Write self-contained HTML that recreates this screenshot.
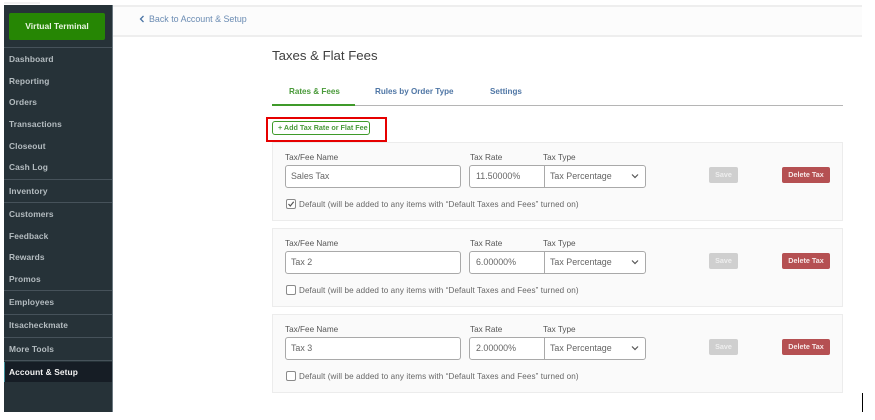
<!DOCTYPE html>
<html><head><meta charset="utf-8"><style>
html,body{margin:0;padding:0;background:#fff;width:875px;height:420px;overflow:hidden;font-family:"Liberation Sans",sans-serif}
#w{left:0;top:0;width:875px;height:420px;filter:blur(.3px)}
div,span{position:absolute;box-sizing:border-box;white-space:nowrap}
#side{left:4px;top:5px;width:109px;height:407px;background:#263238;border-right:1px solid #6d7a82}
.n{left:9px;font-size:8.4px;font-weight:bold;color:#b4bcc0;line-height:10px;letter-spacing:.1px}
.l{left:4px;width:108px;height:1px;background:#46525a}
#hdr{left:113px;top:5px;width:749px;height:32px;background:#fcfcfc;border-top:2px solid #eee;border-bottom:2px solid #eee}
.card{left:272px;width:571px;height:79px;background:#fafafa;border:1px solid #ececec}
.lb{font-size:8.2px;color:#555;line-height:10px}
.box{background:#fff;border:1px solid #a9a9a9;border-radius:3px;height:23px;font-size:8.9px;color:#666;line-height:21px;padding-left:5px}
.sv{left:436px;top:24px;width:29px;height:16px;background:#cfcfcf;border-radius:2px;color:#eee;font-size:7.2px;font-weight:bold;text-align:center;line-height:15px}
.dl{left:509px;top:24px;width:48px;height:16px;background:#b55052;border-radius:2px;color:#f6e6e6;font-size:7.2px;font-weight:bold;text-align:center;line-height:15px}
.cb{left:13px;top:56px;width:10px;height:10px;background:#fff;border:1px solid #8a8a8a;border-radius:2px}
.dt{left:26px;top:57px;font-size:8.1px;color:#666;line-height:10px;letter-spacing:.1px}
</style></head><body><div id="w">
<div style="left:4px;top:2px;width:36px;height:2px;background:#f1f1f1"></div>
<div id="side"></div>
<div style="left:9px;top:13px;width:96px;height:27px;background:#268604;border-radius:2px;color:#e9f5e2;font-size:8.5px;font-weight:bold;text-align:center;line-height:26px">Virtual Terminal</div>
<div class="l" style="top:47px"></div>
<div class="n" style="top:54px">Dashboard</div>
<div class="n" style="top:76px">Reporting</div>
<div class="n" style="top:97px">Orders</div>
<div class="n" style="top:119px">Transactions</div>
<div class="n" style="top:141px">Closeout</div>
<div class="n" style="top:162px">Cash Log</div>
<div class="l" style="top:179px"></div>
<div class="n" style="top:186px">Inventory</div>
<div class="l" style="top:202px"></div>
<div class="n" style="top:209px">Customers</div>
<div class="n" style="top:231px">Feedback</div>
<div class="n" style="top:252px">Rewards</div>
<div class="n" style="top:274px">Promos</div>
<div class="l" style="top:290px"></div>
<div class="n" style="top:297px">Employees</div>
<div class="l" style="top:314px"></div>
<div class="n" style="top:320px">Itsacheckmate</div>
<div class="l" style="top:337px"></div>
<div class="n" style="top:344px">More Tools</div>
<div class="l" style="top:360px"></div>
<div style="left:4px;top:362px;width:108px;height:20px;background:#161d25;border-left:1px solid #3d8f9a"></div>
<div class="n" style="top:367px;color:#f2f2f2">Account &amp; Setup</div>

<div id="hdr"></div>
<svg style="position:absolute;left:139px;top:15px" width="6" height="8" viewBox="0 0 6 8"><path d="M4.5 1L1.5 4l3 3" fill="none" stroke="#4a74a5" stroke-width="1.3"/></svg>
<div style="left:149px;top:14px;font-size:8.9px;color:#6b8cb3;line-height:10px">Back to Account &amp; Setup</div>

<div style="left:272px;top:47px;font-size:13.2px;color:#3f3f3f;line-height:17px">Taxes &amp; Flat Fees</div>
<div style="left:289px;top:87px;font-size:8.1px;font-weight:bold;color:#4a9a3a;line-height:10px">Rates &amp; Fees</div>
<div style="left:375px;top:87px;font-size:8.1px;font-weight:bold;color:#4f76a5;line-height:10px">Rules by Order Type</div>
<div style="left:490px;top:87px;font-size:8.1px;font-weight:bold;color:#4f76a5;line-height:10px">Settings</div>
<div style="left:272px;top:105px;width:571px;height:1px;background:#b5b5b5"></div>
<div style="left:272px;top:104px;width:83px;height:2px;background:#3f9a2a"></div>

<div style="left:266px;top:117px;width:121px;height:25px;border:2px solid #e60000"></div>
<div style="left:272px;top:121px;width:98px;height:14px;background:#fff;border:1px solid #3f9a2a;border-radius:3px;color:#4a9a3a;font-size:7.2px;font-weight:bold;line-height:12px;padding-left:5px">+ Add Tax Rate or Flat Fee</div>

<div class="card" style="top:142px">
 <div class="lb" style="left:12px;top:10px">Tax/Fee Name</div>
 <div class="lb" style="left:197px;top:10px">Tax Rate</div>
 <div class="lb" style="left:270px;top:10px">Tax Type</div>
 <div class="box" style="left:12px;top:22px;width:176px">Sales Tax</div>
 <div class="box" style="left:196px;top:22px;width:76px;border-radius:3px 0 0 3px;padding-left:6px">11.50000%</div>
 <div class="box" style="left:271px;top:22px;width:102px;border-radius:0 3px 3px 0">Tax Percentage</div>
 <svg style="position:absolute;left:358px;top:30px" width="8" height="6" viewBox="0 0 8 6"><path d="M1 1.5L4 4.5 7 1.5" fill="none" stroke="#555" stroke-width="1.2"/></svg>
 <div class="sv">Save</div><div class="dl">Delete Tax</div>
 <div class="cb"><svg style="position:absolute;left:0;top:0" width="8" height="8" viewBox="0 0 8 8"><path d="M1.5 4L3.3 6 6.7 1.8" fill="none" stroke="#555" stroke-width="1.2"/></svg></div>
 <div class="dt">Default (will be added to any items with “Default Taxes and Fees” turned on)</div>
</div>
<div class="card" style="top:228px">
 <div class="lb" style="left:12px;top:10px">Tax/Fee Name</div>
 <div class="lb" style="left:197px;top:10px">Tax Rate</div>
 <div class="lb" style="left:270px;top:10px">Tax Type</div>
 <div class="box" style="left:12px;top:22px;width:176px">Tax 2</div>
 <div class="box" style="left:196px;top:22px;width:76px;border-radius:3px 0 0 3px;padding-left:6px">6.00000%</div>
 <div class="box" style="left:271px;top:22px;width:102px;border-radius:0 3px 3px 0">Tax Percentage</div>
 <svg style="position:absolute;left:358px;top:30px" width="8" height="6" viewBox="0 0 8 6"><path d="M1 1.5L4 4.5 7 1.5" fill="none" stroke="#555" stroke-width="1.2"/></svg>
 <div class="sv">Save</div><div class="dl">Delete Tax</div>
 <div class="cb"></div>
 <div class="dt">Default (will be added to any items with “Default Taxes and Fees” turned on)</div>
</div>
<div class="card" style="top:314px">
 <div class="lb" style="left:12px;top:10px">Tax/Fee Name</div>
 <div class="lb" style="left:197px;top:10px">Tax Rate</div>
 <div class="lb" style="left:270px;top:10px">Tax Type</div>
 <div class="box" style="left:12px;top:22px;width:176px">Tax 3</div>
 <div class="box" style="left:196px;top:22px;width:76px;border-radius:3px 0 0 3px;padding-left:6px">2.00000%</div>
 <div class="box" style="left:271px;top:22px;width:102px;border-radius:0 3px 3px 0">Tax Percentage</div>
 <svg style="position:absolute;left:358px;top:30px" width="8" height="6" viewBox="0 0 8 6"><path d="M1 1.5L4 4.5 7 1.5" fill="none" stroke="#555" stroke-width="1.2"/></svg>
 <div class="sv">Save</div><div class="dl">Delete Tax</div>
 <div class="cb"></div>
 <div class="dt">Default (will be added to any items with “Default Taxes and Fees” turned on)</div>
</div>
<div style="left:862px;top:393px;width:1px;height:19px;background:#000"></div>
</div></body></html>
